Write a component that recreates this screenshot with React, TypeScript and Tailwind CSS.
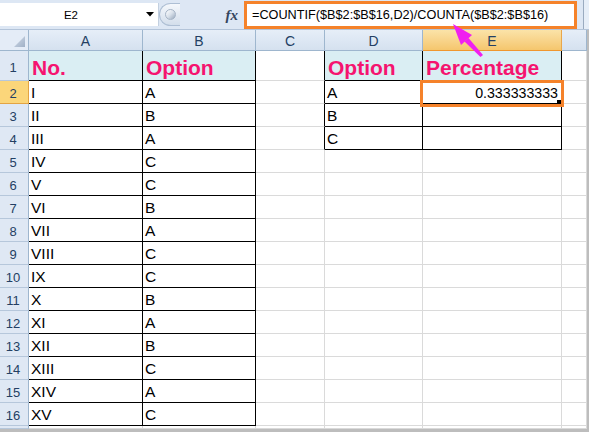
import React from 'react';

const A_COL = ['I', 'II', 'III', 'IV', 'V', 'VI', 'VII', 'VIII', 'IX', 'X', 'XI', 'XII', 'XIII', 'XIV', 'XV'];
const B_COL = ['A', 'B', 'A', 'C', 'C', 'B', 'A', 'C', 'C', 'B', 'A', 'B', 'C', 'A', 'C'];
const D_COL = ['A', 'B', 'C'];

const rb = (black: boolean) => (black ? 'border-r-black' : 'border-r-[#dadada]');
const bb = (black: boolean) => (black ? 'border-b-black' : 'border-b-[#dadada]');

function RowHeader({ n }: { n: number }) {
  const selected = n === 2;
  const h = n === 1 ? 'h-[30px] pb-[4px]' : n === 17 ? 'h-[3px]' : 'h-[23px] pb-[1px]';
  const bg = selected ? 'bg-[#fbd67a] border-r-[#e3a443] border-b-[#e3a443]' : 'bg-[#dfe8f4] border-r-[#9eb6ce] border-b-[#b6c7db]';
  return (
    <div className={`flex items-end justify-center pr-[2px] border-r border-b ${h} ${bg} text-[13px] leading-[16px] text-[#243f63] overflow-hidden`}>
      {n === 17 ? null : n}
    </div>
  );
}

function ColHeader({ label }: { label: string }) {
  const selected = label === 'E';
  const bg = selected
    ? 'bg-linear-to-b from-[#fbe3a8] to-[#f5c66d] border-r-[#e9a64a] border-b-[#f0962e]'
    : 'bg-linear-to-b from-[#e6eef8] to-[#d5e1ef] border-r-[#9eb6ce] border-b-[#9eb6ce]';
  return (
    <div className={`flex items-end justify-center pb-[1px] h-[21px] border-r border-b ${bg} text-[14px] leading-[16px] text-[#243f63]`}>
      {label}
    </div>
  );
}

function DataCell({
  r,
  text,
  black,
  fill,
  kind,
}: {
  r: number;
  text?: string;
  black: boolean;
  fill?: boolean;
  kind?: 'head' | 'num' | 'text';
}) {
  const h = r === 1 ? 'h-[30px]' : r === 17 ? 'h-[3px]' : 'h-[23px]';
  const bg = fill ? 'bg-[#daeef3]' : 'bg-white';
  let content: React.ReactNode = null;
  if (text) {
    if (kind === 'head') {
      content = <span className="pl-[3px] text-[21px] leading-[24px] font-bold text-[#f5146f]">{text}</span>;
    } else if (kind === 'num') {
      content = <span className="ml-auto pr-[3px] pb-[1px] text-[14.2px] leading-[18px] text-black">{text}</span>;
    } else {
      content = <span className="pl-[2px] pb-[1px] text-[15.5px] leading-[18px] text-black">{text}</span>;
    }
  }
  return (
    <div className={`flex items-end w-full border-r border-b ${h} ${bg} ${rb(black)} ${bb(black)} overflow-hidden whitespace-nowrap`}>
      {content}
    </div>
  );
}

function Row({ r }: { r: number }) {
  const inTable1 = r >= 1 && r <= 16;
  const inTable2 = r >= 1 && r <= 4;
  const aText = r === 1 ? 'No.' : r >= 2 && r <= 16 ? A_COL[r - 2] : undefined;
  const bText = r === 1 ? 'Option' : r >= 2 && r <= 16 ? B_COL[r - 2] : undefined;
  const dText = r === 1 ? 'Option' : r >= 2 && r <= 4 ? D_COL[r - 2] : undefined;
  const eText = r === 1 ? 'Percentage' : r === 2 ? '0.333333333' : undefined;
  const kindText = r === 1 ? 'head' : 'text';
  return (
    <>
      <RowHeader n={r} />
      <DataCell r={r} text={aText} black={inTable1} fill={r === 1} kind={kindText} />
      <DataCell r={r} text={bText} black={inTable1} fill={r === 1} kind={kindText} />
      <div
        className={`border-r border-b ${r === 1 ? 'h-[30px]' : r === 17 ? 'h-[3px]' : 'h-[23px]'} bg-white ${rb(inTable2)} border-b-[#dadada]`}
      />
      <DataCell r={r} text={dText} black={inTable2} fill={r === 1} kind={kindText} />
      <DataCell r={r} text={eText} black={inTable2} fill={r === 1} kind={r === 1 ? 'head' : 'num'} />
      <DataCell r={r} black={false} />
    </>
  );
}

export default function App() {
  const rows = Array.from({ length: 17 }, (_, i) => i + 1);
  return (
    <div className="relative w-[589px] h-[432px] overflow-hidden bg-white font-['Liberation_Sans',Arial,sans-serif]">
      {/* Formula bar */}
      <div className="flex h-[30px] bg-[#dde7f4] border-b border-[#b3c4d9]">
        <div className="flex items-stretch w-[159px] mt-[3px] mb-[3px] bg-white border-r border-[#c3d0e0]">
          <div className="flex-1 flex items-center justify-center pl-[0px] text-[11.5px] leading-[14px] text-black">E2</div>
          <div className="w-[16px] flex items-center justify-center">
            <svg width="8" height="5" viewBox="0 0 8 5">
              <polygon points="0,0 8,0 4,4.5" fill="#000" />
            </svg>
          </div>
        </div>
        <div className="flex items-center">
          <div className="flex items-center justify-center w-[21px] h-[23px] rounded-l-full bg-linear-to-b from-[#f5f8fc] to-[#d3deeb] border border-r-0 border-[#aebfd4]">
            <div className="w-[11px] h-[11px] rounded-full bg-linear-to-br from-[#ffffff] via-[#d9e1ea] to-[#9aa9bc] border border-[#a6b4c6]" />
          </div>
        </div>
        <div className="w-[64px] flex items-center justify-end pr-[6px]">
          <span className="font-['Liberation_Serif',serif] italic font-bold text-[15px] leading-[16px] text-[#35465e]">fx</span>
        </div>
        <div className="w-[333px] h-[28px] mt-[1px] border-[3px] border-[#f5822a] bg-white flex items-center pl-[5px]">
          <span className="text-[12.7px] leading-[16px] text-black whitespace-nowrap">=COUNTIF($B$2:$B$16,D2)/COUNTA($B$2:$B$16)</span>
        </div>
        <div className="flex-1 flex">
          <div className="w-[6px]" />
          <div className="w-[1px] bg-[#9aabc0]" />
          <div className="flex-1 bg-[#e6eef8]" />
        </div>
      </div>

      {/* Sheet */}
      <div className="w-[589px] border-r-2 border-b-[3px] border-r-[#bdbdbd] border-b-[#bdbdbd]">
        <div className="grid grid-cols-[29px_114px_113px_69px_98px_139px_25px]">
          <div className="relative h-[21px] bg-[#e4ecf7] border-r border-b border-[#9eb6ce] flex items-end justify-end pr-[3px] pb-[3px]">
            <svg width="11" height="11" viewBox="0 0 11 11">
              <defs>
                <linearGradient id="tri" x1="0" y1="0" x2="1" y2="1">
                  <stop offset="0" stopColor="#d3dcea" />
                  <stop offset="1" stopColor="#9fb0c6" />
                </linearGradient>
              </defs>
              <polygon points="11,0 11,11 0,11" fill="url(#tri)" />
            </svg>
          </div>
          {['A', 'B', 'C', 'D', 'E', ''].map((c, i) => (
            <ColHeader key={i} label={c} />
          ))}
          {rows.map((r) => (
            <Row key={r} r={r} />
          ))}
        </div>
      </div>

      {/* Orange annotation around E2 */}
      <div className="absolute left-[420px] top-[80px] w-[144px] h-[27px] border-[3px] border-[#f5822a] pointer-events-none" />
      <div className="absolute left-[557px] top-[100px] w-[4px] h-[3px] bg-black pointer-events-none" />

      {/* Magenta arrow */}
      <svg className="absolute inset-0 pointer-events-none" width="589" height="432" viewBox="0 0 589 432">
        <polygon points="453,24 461,45 472,35" fill="#f020f0" />
        <polygon points="464.5,41.5 468.5,38 483,55 480.5,57" fill="#f020f0" />
      </svg>
    </div>
  );
}
